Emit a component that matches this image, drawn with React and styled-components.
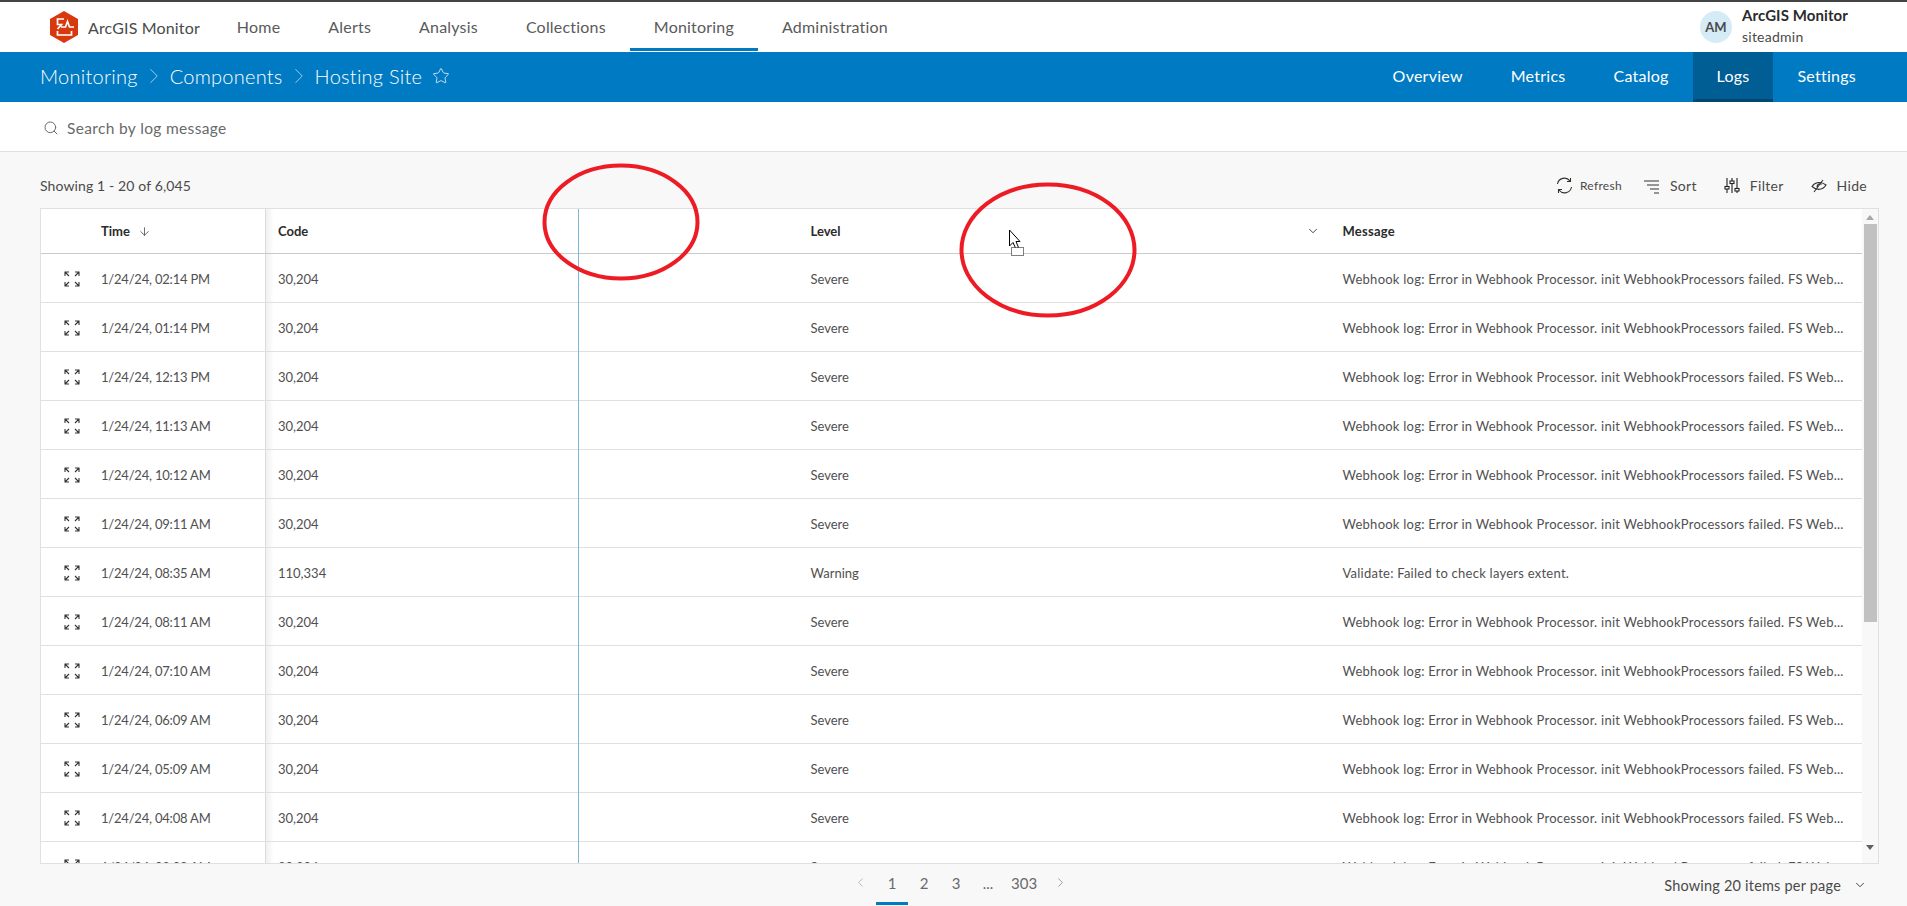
import React from "react";
import styled, { createGlobalStyle } from "styled-components";
import { ChevronDown, ChevronLeft, ChevronRight, Search, Star, ArrowDown } from "lucide-react";

const logs = [
  { time: "02:14 PM" },
  { time: "01:14 PM" },
  { time: "12:13 PM" },
  { time: "11:13 AM" },
  { time: "10:12 AM" },
  { time: "09:11 AM" },
  { time: "08:35 AM", code: "110,334", level: "Warning", message: "Validate: Failed to check layers extent." },
  { time: "08:11 AM" },
  { time: "07:10 AM" },
  { time: "06:09 AM" },
  { time: "05:09 AM" },
  { time: "04:08 AM" },
  { time: "03:08 AM" },
];

const webhookMessage = "Webhook log: Error in Webhook Processor. init WebhookProcessors failed. FS Web...";

const GlobalStyle = createGlobalStyle`
  html, body {
    margin: 0;
    height: 100%;
    overflow: hidden;
    background: #f8f8f8;
    font-family: "Lato", "Open Sans", sans-serif;
    color: #4a4a4a;
  }
  * { box-sizing: border-box; }
`;

const Page = styled.div`
  position: relative;
  width: 1907px;
  height: 906px;
  overflow: hidden;
`;

const TopBar = styled.header`
  display: flex;
  align-items: stretch;
  height: 52px;
  padding-left: 50px;
  background: #fff;
  border-top: 2px solid #444;
`;

const Brand = styled.div`
  display: flex;
  align-items: center;
  gap: 10px;
  font-size: 16px;
  letter-spacing: 0.15px;
  color: #4a4a4a;
`;

const Nav = styled.nav`
  display: flex;
  margin-left: 13px;
`;

const NavItem = styled.div`
  display: flex;
  align-items: center;
  padding: 3px 24px 0;
  font-size: 16px;
  letter-spacing: 0.2px;
  color: #5a5a5a;
  border-bottom: 3px solid ${(p) => (p.$active ? "#007ac2" : "transparent")};
  margin-bottom: 1px;
`;

const User = styled.div`
  display: flex;
  align-items: center;
  gap: 10px;
  margin-left: auto;
  padding-right: 59px;
`;

const Avatar = styled.div`
  display: flex;
  align-items: center;
  justify-content: center;
  width: 32px;
  height: 32px;
  border-radius: 50%;
  background: #d5ebf5;
  font-size: 13px;
  font-weight: 700;
  color: #4a4a4a;
`;

const UserText = styled.div`
  display: flex;
  flex-direction: column;
  gap: 4px;
  margin-top: -3px;
`;

const UserName = styled.div`
  font-size: 15px;
  font-weight: 700;
  line-height: 18px;
  letter-spacing: 0.1px;
  color: #2b2b2b;
`;

const UserLogin = styled.div`
  font-size: 14px;
  line-height: 17px;
  letter-spacing: 0.25px;
  color: #4a4a4a;
`;

const BlueBar = styled.div`
  display: flex;
  align-items: stretch;
  justify-content: space-between;
  height: 50px;
  padding: 0 27px 0 40px;
  background: #007ac2;
  color: #fff;
`;

const Crumbs = styled.div`
  display: flex;
  align-items: center;
  gap: 3px;
  padding-bottom: 3px;
  font-size: 20px;
  font-weight: 300;
  letter-spacing: 0.25px;
`;

const Tabs = styled.div`
  display: flex;
`;

const Tab = styled.div`
  display: flex;
  align-items: center;
  padding: 0 24px;
  font-size: 16px;
  letter-spacing: 0.25px;
  color: #fff;
  background: ${(p) => (p.$active ? "#005e95" : "transparent")};
  border-bottom: 3px solid ${(p) => (p.$active ? "#00466f" : "transparent")};
`;

const SearchRow = styled.div`
  display: flex;
  align-items: center;
  gap: 8px;
  height: 50px;
  padding: 2px 0 0 43px;
  background: #fff;
  border-bottom: 1px solid #e0e0e0;
  font-size: 15.5px;
  letter-spacing: 0.35px;
  color: #6a6a6a;
`;

const Toolbar = styled.div`
  display: flex;
  align-items: center;
  justify-content: space-between;
  height: 56px;
  padding: 11px 40px 0;
  font-size: 14px;
  letter-spacing: 0.12px;
`;

const Actions = styled.div`
  display: flex;
  align-items: center;
  gap: 27px;
`;

const Action = styled.div`
  display: flex;
  align-items: center;
  gap: ${(p) => (p.$small ? "7px" : "10px")};
  margin-right: ${(p) => (p.$small ? "-5px" : "0")};
  font-size: ${(p) => (p.$small ? "12px" : "14px")};
  letter-spacing: 0.3px;
  color: #4a4a4a;
`;

const Table = styled.div`
  display: flex;
  height: 656px;
  margin: 0 28px 0 40px;
  background: #fff;
  border: 1px solid #e0e0e0;
`;

const TableBody = styled.div`
  position: relative;
  flex: 1;
  overflow: hidden;
`;

const Row = styled.div`
  display: grid;
  grid-template-columns: 225px 532.5px 532px 1fr;
  height: ${(p) => (p.$head ? "45px" : "49px")};
  border-bottom: 1px solid ${(p) => (p.$head ? "#cacaca" : "#e0e0e0")};
`;

const Cell = styled.div`
  display: flex;
  align-items: center;
  padding: ${(p) => (p.$head ? "0" : "1px")} 12px 0;
  font-size: 13px;
  white-space: nowrap;
  color: ${(p) => (p.$head ? "#2b2b2b" : "#505050")};
  font-weight: ${(p) => (p.$head ? 700 : 400)};
`;

const MessageCell = styled(Cell)`
  letter-spacing: 0.25px;
`;

const FrozenCell = styled(Cell)`
  padding: 1px 0 0 23px;
  gap: 21px;
  letter-spacing: -0.2px;
  border-right: 1px solid #ddd;
`;

const HeadTime = styled(FrozenCell)`
  padding: 0 0 0 60px;
  gap: 8px;
  letter-spacing: 0;
`;

const LevelHead = styled(Cell)`
  justify-content: space-between;
  padding-right: 11px;
`;

const ShadowedCell = styled(Cell)`
  background: linear-gradient(to right, #f0f0f0, #fff 8px);
`;

const ResizeGuide = styled.div`
  position: absolute;
  top: 0;
  bottom: 0;
  left: 537px;
  width: 1px;
  background: #7db6d8;
`;

const ScrollTrack = styled.div`
  display: flex;
  flex-direction: column;
  align-items: center;
  width: 16px;
  padding: 0 1px;
  background: #f8f8f8;
`;

const ArrowUp = styled.div`
  flex: none;
  margin: 6px 0 4px;
  border: 4px solid transparent;
  border-top: 0;
  border-bottom: 5px solid #a8a8a8;
`;

const ArrowDownMark = styled.div`
  flex: none;
  margin-top: 223px;
  border: 4px solid transparent;
  border-bottom: 0;
  border-top: 5px solid #606060;
`;

const Thumb = styled.div`
  flex: none;
  width: 13px;
  height: 398px;
  background: #c1c1c1;
`;

const Footer = styled.div`
  display: flex;
  align-items: stretch;
  height: 42px;
  padding: 0 40px 0 844px;
`;

const Pager = styled.div`
  display: flex;
  align-items: stretch;
`;

const PageBtn = styled.div`
  display: flex;
  align-items: center;
  justify-content: center;
  min-width: 32px;
  padding: 0 ${(p) => (p.$wide ? "7px" : "0")} 1px;
  font-size: 15px;
  color: #6a6a6a;
  border-bottom: 3px solid ${(p) => (p.$active ? "#007ac2" : "transparent")};
  margin-bottom: 1px;
`;

const PerPage = styled.div`
  display: flex;
  align-items: center;
  gap: 12px;
  margin-left: auto;
  font-size: 14.5px;
  letter-spacing: 0.2px;
  color: #4a4a4a;
`;

const Annotation = styled.svg`
  position: absolute;
  left: ${(p) => p.$x}px;
  top: ${(p) => p.$y}px;
  pointer-events: none;
`;

const Logo = () => (
  <svg width="28" height="32" viewBox="0 0 28 32">
    <path d="M14 0 L28 8 V24 L14 32 L0 24 V8 Z" fill="#d8380e" />
    <path
      d="M14 8 H7.5 V13.5 H11.5 L7.5 18 M7.5 20 V24 H21.5 V20 M11 16 H15.5 L17.5 10.5 L19.5 16 H24"
      fill="none"
      stroke="#fff"
      strokeWidth="1.7"
    />
  </svg>
);

const ExpandIcon = () => (
  <svg width="16" height="16" viewBox="0 0 16 16" fill="none" stroke="#333" strokeWidth="1.1">
    <path d="M1 5 V1 H5 M1 1 L5 5 M11 1 H15 V5 M15 1 L11 5 M1 11 V15 H5 M1 15 L5 11 M11 15 H15 V11 M15 15 L11 11" />
  </svg>
);

const RefreshIcon = () => (
  <svg width="17" height="17" viewBox="0 0 17 17" fill="none" stroke="#333" strokeWidth="1.1">
    <path d="M1.5 7 A7 7 0 0 1 14 4 M15.5 10 A7 7 0 0 1 3 13 M14.5 1 V4.5 H11 M2.5 16 V12.5 H6" />
  </svg>
);

const SortIcon = () => (
  <svg width="16" height="16" viewBox="0 0 16 16" stroke="#333" strokeWidth="1.1">
    <path d="M0 3 H15 M3 7 H15 M6 11 H15 M10 15 H15" />
  </svg>
);

const FilterIcon = () => (
  <svg width="16" height="17" viewBox="0 0 16 17" fill="none" stroke="#222" strokeWidth="1.1">
    <path d="M3 1 V16 M8 1 V16 M13 1 V16" />
    <rect x="1" y="9.5" width="4" height="2.5" fill="#fff" />
    <rect x="6" y="4" width="4" height="2.5" fill="#fff" />
    <rect x="11" y="11.5" width="4" height="2.5" fill="#fff" />
  </svg>
);

const HideIcon = () => (
  <svg width="16" height="14" viewBox="0 0 16 14" fill="none" stroke="#333" strokeWidth="1.1">
    <path d="M1 7.5 C4 3 10 2 15 6 C12 11 6 12 1 7.5 Z M12 1 L3 13 M6 8 C6 5 9 4 10.5 5.5" />
  </svg>
);

const Separator = () => <ChevronRight size={26} strokeWidth={0.7} color="#cfe6f3" />;

const App = () => (
  <Page>
    <GlobalStyle />
    <TopBar>
      <Brand>
        <Logo />
        ArcGIS Monitor
      </Brand>
      <Nav>
        <NavItem>Home</NavItem>
        <NavItem>Alerts</NavItem>
        <NavItem>Analysis</NavItem>
        <NavItem>Collections</NavItem>
        <NavItem $active>Monitoring</NavItem>
        <NavItem>Administration</NavItem>
      </Nav>
      <User>
        <Avatar>AM</Avatar>
        <UserText>
          <UserName>ArcGIS Monitor</UserName>
          <UserLogin>siteadmin</UserLogin>
        </UserText>
      </User>
    </TopBar>

    <BlueBar>
      <Crumbs>
        Monitoring
        <Separator />
        Components
        <Separator />
        Hosting Site
        <Star size={18} strokeWidth={1} color="#fff" style={{ marginLeft: 7 }} />
      </Crumbs>
      <Tabs>
        <Tab>Overview</Tab>
        <Tab>Metrics</Tab>
        <Tab>Catalog</Tab>
        <Tab $active>Logs</Tab>
        <Tab>Settings</Tab>
      </Tabs>
    </BlueBar>

    <SearchRow>
      <Search size={16} strokeWidth={1.5} color="#6a6a6a" />
      Search by log message
    </SearchRow>

    <Toolbar>
      <span>Showing 1 - 20 of 6,045</span>
      <Actions>
        <Action $small>
          <RefreshIcon />
          Refresh
        </Action>
        <Action>
          <SortIcon />
          Sort
        </Action>
        <Action>
          <FilterIcon />
          Filter
        </Action>
        <Action>
          <HideIcon />
          Hide
        </Action>
      </Actions>
    </Toolbar>

    <Table>
      <TableBody>
        <Row $head>
          <HeadTime $head>
            Time
            <ArrowDown size={13} strokeWidth={1.2} color="#222" />
          </HeadTime>
          <ShadowedCell $head>Code</ShadowedCell>
          <LevelHead $head>
            Level
            <ChevronDown size={14} strokeWidth={1.4} color="#222" />
          </LevelHead>
          <MessageCell $head>Message</MessageCell>
        </Row>
        {logs.map((log) => (
          <Row key={log.time}>
            <FrozenCell>
              <ExpandIcon />
              <span>1/24/24, {log.time}</span>
            </FrozenCell>
            <ShadowedCell>{log.code || "30,204"}</ShadowedCell>
            <Cell>{log.level || "Severe"}</Cell>
            <MessageCell>{log.message || webhookMessage}</MessageCell>
          </Row>
        ))}
        <ResizeGuide />
      </TableBody>
      <ScrollTrack>
        <ArrowUp />
        <Thumb />
        <ArrowDownMark />
      </ScrollTrack>
    </Table>

    <Footer>
      <Pager>
        <PageBtn>
          <ChevronLeft size={15} strokeWidth={1} color="#999" />
        </PageBtn>
        <PageBtn $active>1</PageBtn>
        <PageBtn>2</PageBtn>
        <PageBtn>3</PageBtn>
        <PageBtn>...</PageBtn>
        <PageBtn $wide>303</PageBtn>
        <PageBtn>
          <ChevronRight size={15} strokeWidth={1} color="#666" />
        </PageBtn>
      </Pager>
      <PerPage>
        Showing 20 items per page
        <ChevronDown size={14} strokeWidth={1.4} color="#222" />
      </PerPage>
    </Footer>

    <Annotation $x={541} $y={162} width="160" height="120" viewBox="0 0 160 120">
      <ellipse cx="80" cy="60" rx="76.5" ry="56.5" fill="none" stroke="#ed1c24" strokeWidth="4" />
    </Annotation>
    <Annotation $x={959} $y={181} width="180" height="138" viewBox="0 0 180 138">
      <ellipse cx="89" cy="69" rx="86.5" ry="65.5" fill="none" stroke="#ed1c24" strokeWidth="4" />
    </Annotation>
    <Annotation $x={1008} $y={229} width="20" height="28" viewBox="0 0 20 28">
      <path d="M1.5 1 V17 L5 13.5 L8 20 L10.5 18.5 L8 12.5 H12 Z" fill="#fff" stroke="#000" strokeWidth="1" />
      <rect x="3.5" y="18.5" width="12" height="8" fill="#fff" stroke="#000" strokeDasharray="1 1" />
    </Annotation>
  </Page>
);

export default App;
